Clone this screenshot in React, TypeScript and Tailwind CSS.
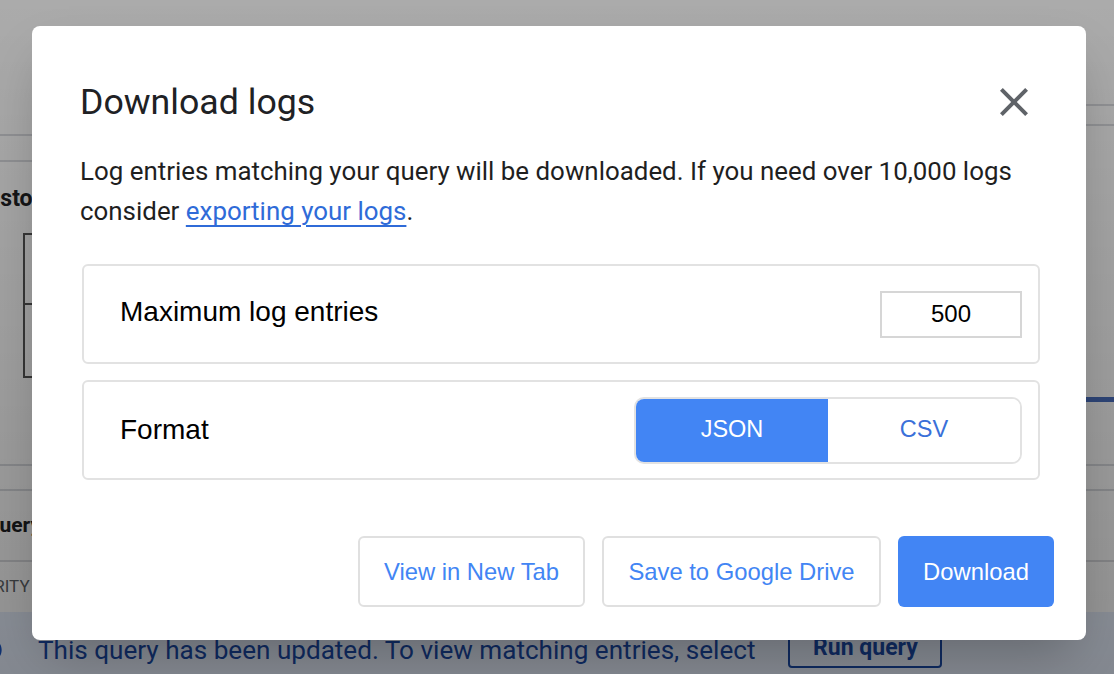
import { useState } from 'react'

const CloseIcon = () => (
  <svg viewBox="0 0 24 24" className="h-[48px] w-[48px] fill-[#5f6368]">
    <path d="M19 6.41L17.59 5 12 10.59 6.41 5 5 6.41 10.59 12 5 17.59 6.41 19 12 13.41 17.59 19 19 17.59 13.41 12z" />
  </svg>
)

const InfoIcon = () => (
  <svg viewBox="0 0 24 24" className="h-[28px] w-[28px] fill-[#1a56c4]">
    <path d="M11 7h2v2h-2zm0 4h2v6h-2zm1-9C6.48 2 2 6.48 2 12s4.48 10 10 10 10-4.48 10-10S17.52 2 12 2zm0 18c-4.41 0-8-3.59-8-8s3.59-8 8-8 8 3.59 8 8-3.59 8-8 8z" />
  </svg>
)

const Background = () => (
  <div className="flex h-full w-full flex-col bg-white font-['Roboto',sans-serif] text-[#202124]">
    <div className="flex h-[464px]">
      <div className="flex w-[560px] flex-col">
        <div className="h-[136px] border-b-2 border-[#dadce0]" />
        <div className="h-[26px] border-b-2 border-[#dadce0]" />
        <div className="-ml-[22px] pt-[24px] text-[23px] font-bold leading-[26px]">Histogram</div>
        <div className="ml-[23px] mt-[21px] flex h-[145px] w-[420px] flex-col border-2 border-[#555]">
          <div className="h-[70px] border-b-2 border-[#555]" />
        </div>
      </div>
      <div className="flex flex-1 flex-col">
        <div className="h-[106px] border-b-2 border-[#dadce0]" />
        <div className="h-[20px] border-b-2 border-[#dadce0]" />
        <div className="mt-[271px] h-[5px] bg-[#4a6fc0]" />
        <div className="ml-[519px] mt-[1px] h-[4px] w-[3px] bg-[#333]" />
      </div>
    </div>
    <div className="h-[27px] border-y-2 border-[#dadce0]" />
    <div className="flex h-[71px] items-center border-b-2 border-[#dadce0]">
      <span className="-ml-[15px] text-[21px] font-bold">Query results</span>
    </div>
    <div className="flex h-[50px] items-center">
      <span className="-ml-[46px] text-[17px] text-[#5f6368]">SEVERITY</span>
    </div>
    <div className="flex flex-1 items-start bg-[#e8f0fe] pt-[16px] text-[#1a4aa8]">
      <div className="-ml-[24px] mr-[34px] mt-[8px]">
        <InfoIcon />
      </div>
      <span className="mt-[6px] text-[26.1px] leading-[32px]">
        This query has been updated. To view matching entries, select
      </span>
      <span className="ml-[33px] flex h-[40px] w-[154px] items-center justify-center rounded-[4px] border-2 border-[#1a4aa8] text-[23px] font-bold">
        Run query
      </span>
    </div>
  </div>
)

export default function App() {
  const [format, setFormat] = useState<'JSON' | 'CSV'>('JSON')

  return (
    <div className="relative h-[674px] w-[1114px] overflow-hidden">
      <Background />
      <div className="absolute inset-0 bg-linear-to-b from-black/33 to-black/43" />
      <div className="absolute left-[32px] top-[26px] flex h-[614px] w-[1054px] flex-col rounded-[8px] bg-white pb-[33px] pl-[48px] pr-[32px] pt-[52px] font-['Roboto',sans-serif] shadow-2xl">
        <div className="flex items-center justify-between">
          <h2 className="text-[35.7px] leading-[44px] text-[#202124]">Download logs</h2>
          <button className="mr-[16px]">
            <CloseIcon />
          </button>
        </div>
        <p className="mt-[25px] text-[25.9px] leading-[40px] text-[#1f1f1f]">
          Log entries matching your query will be downloaded. If you need over 10,000 logs consider{' '}
          <a className="text-[#2f6bd8] underline decoration-2 underline-offset-[5px]">exporting your logs</a>.
        </p>

        <div className="mr-[14px] ml-[2px] mt-[33px] flex flex-col gap-[16px] font-['Liberation_Sans',Arial,sans-serif]">
          <div className="flex h-[100px] items-center justify-between rounded-[6px] border-2 border-[#e2e2e2] pl-[36px] pr-[16px]">
            <span className="-mt-[4px] text-[28px] text-black">Maximum log entries</span>
            <div className="flex h-[47px] w-[142px] items-center justify-center border-2 border-[#d6d6d6] text-[24px] text-black">
              500
            </div>
          </div>
          <div className="flex h-[100px] items-center justify-between rounded-[6px] border-2 border-[#e2e2e2] pl-[36px] pr-[16px]">
            <span className="text-[28px] text-black">Format</span>
            <div className="flex h-[67px] w-[388px] overflow-hidden rounded-[10px] border-2 border-[#e2e2e2] text-[23.5px]">
              {(['JSON', 'CSV'] as const).map((f) => (
                <button
                  key={f}
                  onClick={() => setFormat(f)}
                  className={
                    format === f
                      ? 'flex flex-1 items-center justify-center bg-[#4285f4] text-white'
                      : 'flex flex-1 items-center justify-center bg-white text-[#3a70d9]'
                  }
                >
                  {f}
                </button>
              ))}
            </div>
          </div>
        </div>

        <div className="mt-auto flex justify-end gap-[17px] font-['Liberation_Sans',Arial,sans-serif] text-[23.8px]">
          <button className="flex h-[71px] w-[227px] items-center justify-center rounded-[6px] border-2 border-[#e0e0e0] text-[#4285f4]">
            View in New Tab
          </button>
          <button className="flex h-[71px] w-[279px] items-center justify-center rounded-[6px] border-2 border-[#e0e0e0] text-[#4285f4]">
            Save to Google Drive
          </button>
          <button className="flex h-[71px] w-[156px] items-center justify-center rounded-[6px] bg-[#4285f4] text-white">
            Download
          </button>
        </div>
      </div>
    </div>
  )
}
